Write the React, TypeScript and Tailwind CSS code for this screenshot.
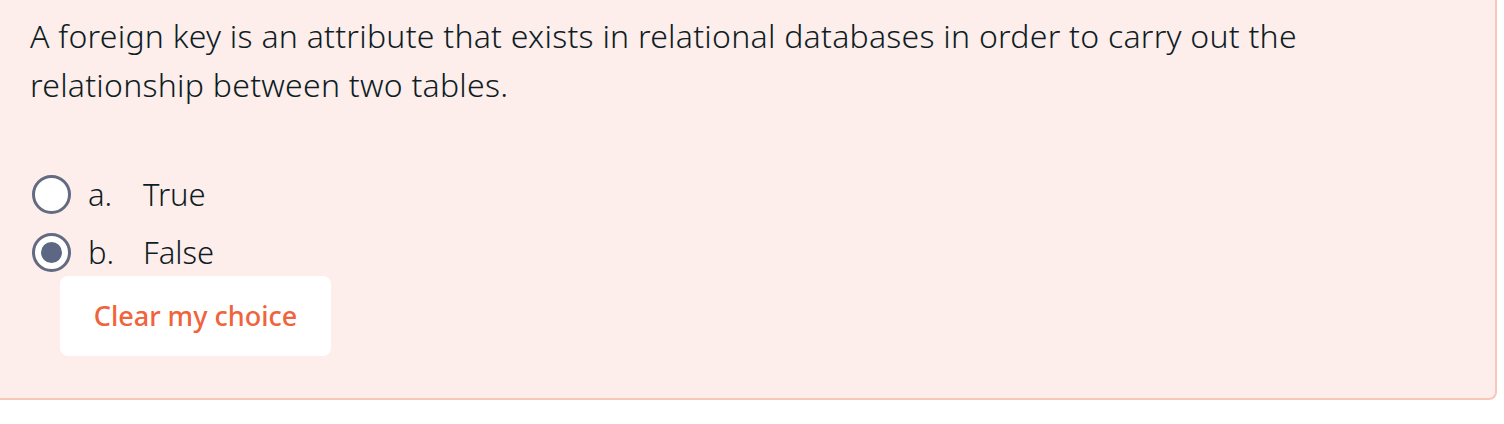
export default function App() {
  return (
    <div className="w-[1504px] h-[424px] bg-white" style={{ fontFamily: '"Noto Sans", "Open Sans", sans-serif' }}>
      <div className="ml-[-2px] w-[1499px] h-[400px] bg-[#fdedeb] border-r-2 border-b-2 border-[#f9c6ba] rounded-br-[8px] pl-[32px] pt-[11px]">
        <p className="text-[32px] leading-[49px] font-light tracking-[0.25px] text-[#0e1d24] w-[1320px]">
          A foreign key is an attribute that exists in relational databases in order to carry out the relationship between two tables.
        </p>
        <div className="mt-[66px] flex flex-col gap-[19px] pl-[2px]">
          <div className="flex items-center h-[39px]">
            <span className="w-[39px] h-[39px] rounded-full border-[3px] border-[#636b80] bg-white"></span>
            <span className="ml-[17px] text-[31px] leading-[39px] font-light text-[#0e1d24] w-[55px]">a.</span>
            <span className="text-[31px] leading-[39px] font-light text-[#0e1d24]">True</span>
          </div>
          <div className="flex items-center h-[39px]">
            <span className="w-[39px] h-[39px] rounded-full border-[3px] border-[#636b80] bg-white flex items-center justify-center">
              <span className="w-[21px] h-[21px] rounded-full bg-[#5c6783]"></span>
            </span>
            <span className="ml-[17px] text-[31px] leading-[39px] font-light text-[#0e1d24] w-[55px]">b.</span>
            <span className="text-[31px] leading-[39px] font-light text-[#0e1d24]">False</span>
          </div>
        </div>
        <button className="mt-[4px] ml-[30px] w-[271px] h-[80px] bg-white rounded-[8px] text-[27px] text-[#f0633b] font-medium">
          Clear my choice
        </button>
      </div>
    </div>
  );
}
